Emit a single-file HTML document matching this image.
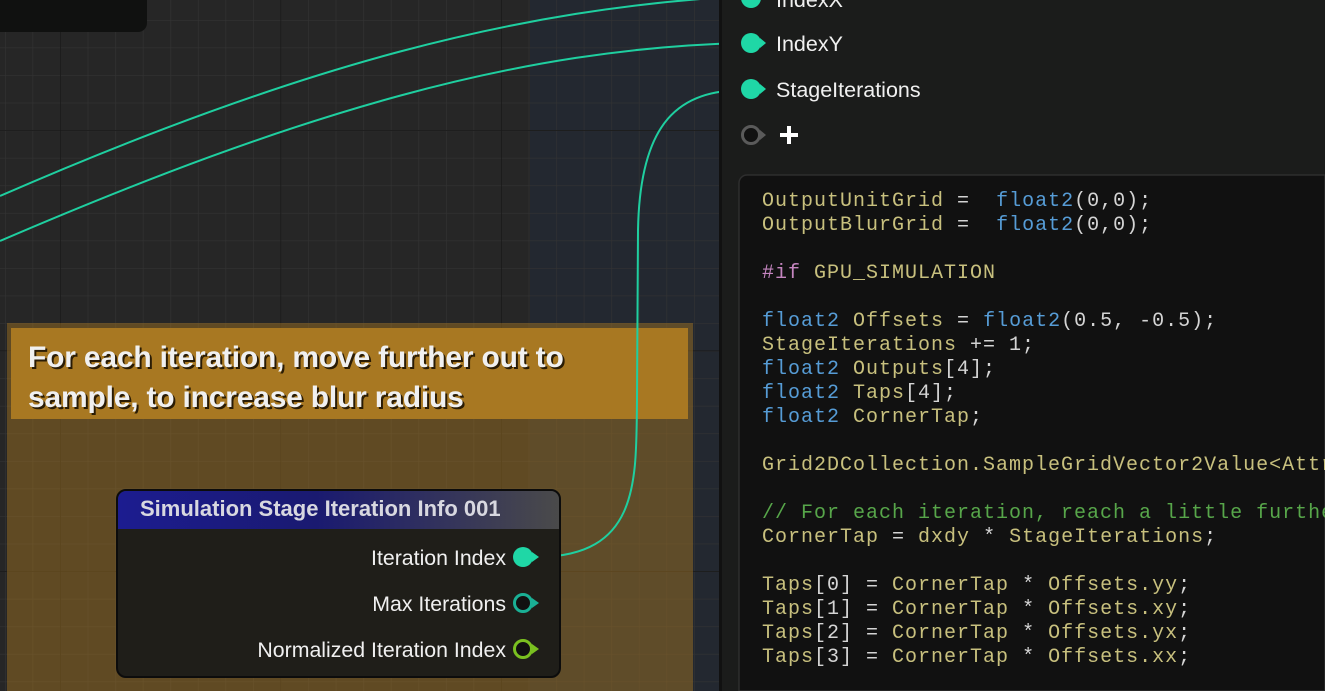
<!DOCTYPE html>
<html><head><meta charset="utf-8"><style>
html,body{margin:0;padding:0;width:1325px;height:691px;overflow:hidden;background:#262626;font-family:"Liberation Sans",sans-serif;}
.abs{position:absolute}
.code{font-family:"Liberation Mono","DejaVu Sans Mono",monospace;font-size:20px;letter-spacing:1px;line-height:24px;white-space:pre;color:#c8c07e}
.b{color:#569cd6}.w{color:#d4d4d4}.p{color:#c586c0}.g{color:#57a64a}
.pinlbl{color:#f0f0f0;font-size:21.3px}
.rl{font-size:21.5px}
</style></head><body>
<svg class="abs" style="left:0;top:0" width="1325" height="691">
<defs>
<pattern id="gr" x="5" y="20" width="27.56" height="27.56" patternUnits="userSpaceOnUse">
<path d="M0 0V27.56M0 0H27.56" stroke="#333" stroke-width="1.2" fill="none"/>
</pattern>
<pattern id="gm" x="60" y="130" width="220.5" height="220.5" patternUnits="userSpaceOnUse">
<path d="M0 0V220.5M0 0H220.5" stroke="#181818" stroke-width="1.5" fill="none"/>
</pattern>
<linearGradient id="hd" x1="0" x2="1" y1="0" y2="0"><stop offset="0" stop-color="#1c1c90"/><stop offset="0.45" stop-color="#1a1a70"/><stop offset="1" stop-color="#4a4a4a"/></linearGradient>
</defs>
<rect x="530" y="0" width="195" height="691" fill="#232830"/>
<rect width="725" height="691" fill="url(#gr)"/>
<rect width="725" height="691" fill="url(#gm)"/>
<rect x="-10" y="-10" width="157" height="42" rx="9" fill="#101110"/>
<rect x="7" y="323" width="686" height="380" fill="#a87822" opacity="0.45"/>
<rect x="11" y="328" width="677" height="91" fill="#a87822"/>
<path d="M0 196 C300 65 520 8 745 -4" stroke="#1fcfa0" stroke-width="2" fill="none"/>
<path d="M0 241 C300 112 520 48 745 43" stroke="#1fcfa0" stroke-width="2" fill="none"/>
<path d="M540 557 C640 555 636 480 637 400 L638 230 C640 120 680 90 745 90" stroke="#1fcfa0" stroke-width="2" fill="none"/>
<rect x="117" y="490" width="443" height="187" rx="9" fill="#1f1e19" stroke="#0c0c0c" stroke-width="2"/>
<path d="M118 529V499a8 8 0 0 1 8-8H551a8 8 0 0 1 8 8V529Z" fill="url(#hd)"/>
<g>
<circle cx="523" cy="557" r="10" fill="#1fd7a6"/><path d="M532 552l7 5-7 5z" fill="#1fd7a6"/>
<circle cx="523" cy="603" r="8.5" fill="#111" stroke="#1ab095" stroke-width="3"/><path d="M532 598l7 5-7 5z" fill="#1ab095"/>
<circle cx="523" cy="649" r="8.5" fill="#111" stroke="#7ac020" stroke-width="3"/><path d="M532 644l7 5-7 5z" fill="#7ac020"/>
</g>
<rect x="721" y="0" width="604" height="691" fill="#1b1c1b"/>
<rect x="719" y="0" width="3" height="691" fill="#111"/>
<g>
<circle cx="751" cy="-2" r="10" fill="#1fd7a6"/>
<circle cx="751" cy="43" r="10" fill="#1fd7a6"/><path d="M760 38l6 5-6 5z" fill="#1fd7a6"/>
<circle cx="751" cy="89" r="10" fill="#1fd7a6"/><path d="M760 84l6 5-6 5z" fill="#1fd7a6"/>
<circle cx="751" cy="135" r="8.5" fill="#111" stroke="#5a5a5a" stroke-width="3"/><path d="M760 130l6 5-6 5z" fill="#5a5a5a"/>
<path d="M780 135h18M789 126v18" stroke="#fff" stroke-width="4"/>
</g>
<path d="M739 691V183a8 8 0 0 1 8-8H1325V691Z" fill="#111" stroke="#2e2e2e" stroke-width="1.5"/>
</svg>
<div class="abs" style="left:28px;top:338px;font-family:'Liberation Sans Narrow','Liberation Sans',sans-serif;font-weight:bold;font-size:30px;letter-spacing:-0.2px;line-height:40px;color:#f0f0f0;text-shadow:2px 2px 0 #2a1c05">For each iteration, move further out to<br>sample, to increase blur radius</div>
<div class="abs" style="left:140px;top:496px;font-size:22px;font-weight:bold;color:#d8d8e0">Simulation Stage Iteration Info 001</div>
<div class="abs pinlbl" style="right:819px;top:546px">Iteration Index</div>
<div class="abs pinlbl" style="right:819px;top:592px">Max Iterations</div>
<div class="abs pinlbl" style="right:819px;top:638px">Normalized Iteration Index</div>
<div class="abs pinlbl rl" style="left:776px;top:-12px">IndexX</div>
<div class="abs pinlbl rl" style="left:776px;top:32px">IndexY</div>
<div class="abs pinlbl rl" style="left:776px;top:78px">StageIterations</div>
<div class="abs code" style="left:762px;top:190px">OutputUnitGrid <span class="w">=</span>  <span class="b">float2</span><span class="w">(0,0);</span>
OutputBlurGrid <span class="w">=</span>  <span class="b">float2</span><span class="w">(0,0);</span>

<span class="p">#if</span> GPU_SIMULATION

<span class="b">float2</span> Offsets <span class="w">=</span> <span class="b">float2</span><span class="w">(0.5, -0.5);</span>
StageIterations <span class="w">+= 1;</span>
<span class="b">float2</span> Outputs<span class="w">[4];</span>
<span class="b">float2</span> Taps<span class="w">[4];</span>
<span class="b">float2</span> CornerTap<span class="w">;</span>

Grid2DCollection.SampleGridVector2Value&lt;Attr

<span class="g">// For each iteration, reach a little further</span>
CornerTap <span class="w">=</span> dxdy <span class="w">*</span> StageIterations<span class="w">;</span>

Taps<span class="w">[0] =</span> CornerTap <span class="w">*</span> Offsets.yy<span class="w">;</span>
Taps<span class="w">[1] =</span> CornerTap <span class="w">*</span> Offsets.xy<span class="w">;</span>
Taps<span class="w">[2] =</span> CornerTap <span class="w">*</span> Offsets.yx<span class="w">;</span>
Taps<span class="w">[3] =</span> CornerTap <span class="w">*</span> Offsets.xx<span class="w">;</span></div>
</body></html>
